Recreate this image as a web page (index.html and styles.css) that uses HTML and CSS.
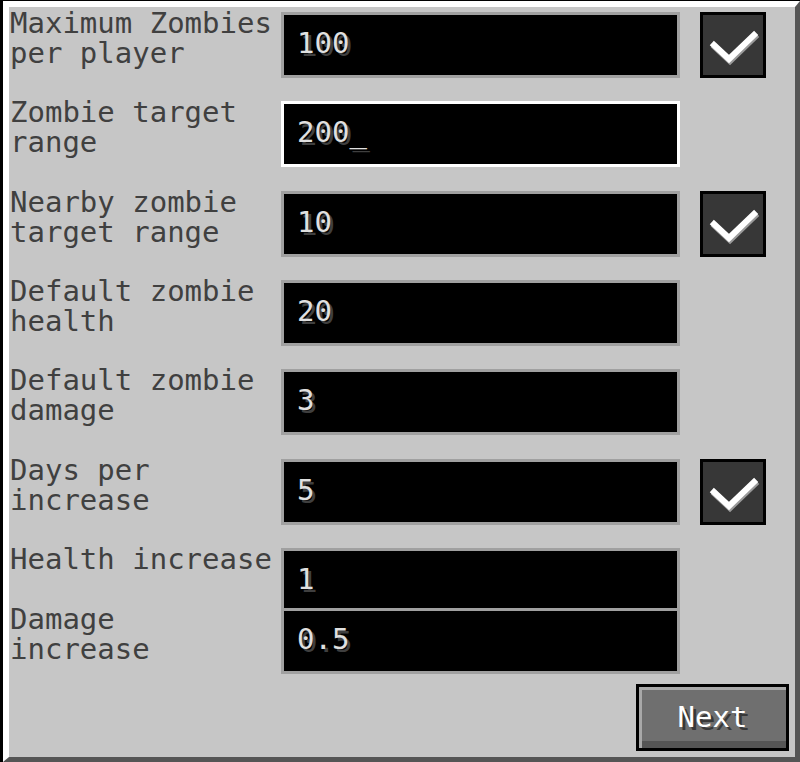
FILE: index.html
```html
<!DOCTYPE html>
<html lang="en">
<head>
    <meta charset="UTF-8">
    <title>Zombie Settings</title>
    <link rel="stylesheet" href="styles.css">
</head>

<body>
    <div class="screen">
        <div class="panel">
            <div class="row">
                <div class="name">Maximum Zombies<br>per player</div>
                <div class="field">100</div>
                <div class="check">
                    <svg viewBox="0 0 60 60" width="60" height="60">
                        <polyline points="12,32 27,46 52,22" class="tick-shade" />
                        <polyline points="11,30 26,44 51,20" class="tick" />
                    </svg>
                </div>
            </div>
            <div class="row">
                <div class="name">Zombie target<br>range</div>
                <div class="field active">200_</div>
            </div>
            <div class="row">
                <div class="name">Nearby zombie<br>target range</div>
                <div class="field">10</div>
                <div class="check">
                    <svg viewBox="0 0 60 60" width="60" height="60">
                        <polyline points="12,32 27,46 52,22" class="tick-shade" />
                        <polyline points="11,30 26,44 51,20" class="tick" />
                    </svg>
                </div>
            </div>
            <div class="row">
                <div class="name">Default zombie<br>health</div>
                <div class="field">20</div>
            </div>
            <div class="row">
                <div class="name">Default zombie<br>damage</div>
                <div class="field">3</div>
            </div>
            <div class="row">
                <div class="name">Days per<br>increase</div>
                <div class="field">5</div>
                <div class="check">
                    <svg viewBox="0 0 60 60" width="60" height="60">
                        <polyline points="12,32 27,46 52,22" class="tick-shade" />
                        <polyline points="11,30 26,44 51,20" class="tick" />
                    </svg>
                </div>
            </div>
            <div class="row short">
                <div class="name">Health increase</div>
                <div class="field">1</div>
            </div>
            <div class="row joined">
                <div class="name">Damage<br>increase</div>
                <div class="field">0.5</div>
            </div>
            <div class="actions">
                <button type="button" class="btn">Next</button>
            </div>
        </div>
    </div>
</body>

</html>
```

FILE: styles.css
```css
body {
    margin: 0;
    background-color: #000;
}

.screen {
    width: 800px;
    height: 762px;
    box-sizing: border-box;
    padding: 1px 0 0 3px;
    background-color: #000;
    overflow: hidden;
}

/* Bevelled grey panel */

.panel {
    height: 761px;
    box-sizing: border-box;
    border-top: 6px solid #fff;
    border-left: 6px solid #fff;
    border-right: 5px solid #555;
    border-bottom: 5px solid #555;
    background-color: #c6c6c6;
    padding: 5px 0 0 1px;
    font-family: "DejaVu Sans Mono", monospace;
    font-size: 29px;
    line-height: 30px;
}

.row {
    display: flex;
    align-items: flex-start;
    height: 66px;
}

.row + .row {
    margin-top: 23.33px;
}

.row.short {
    height: 63px;
}

.row.joined {
    margin-top: -3px;
}

.name {
    width: 271px;
    margin-top: -4px;
    color: #404040;
    white-space: nowrap;
}

/* Text fields */

.field {
    width: 399px;
    height: 66px;
    box-sizing: border-box;
    border: 3px solid #a0a0a0;
    background-color: #000;
    color: #e0e0e0;
    padding: 13px 13px;
    text-shadow: 3px 3px 0 #3f3f3f;
}

.row.short .field {
    height: 63px;
}

.field.active {
    border-color: #fff;
}

/* Checkboxes */

.check {
    margin-left: 20px;
    width: 66px;
    height: 66px;
    box-sizing: border-box;
    border: 3px solid #000;
    background-color: #373737;
}

.check svg {
    display: block;
}

.tick,
.tick-shade {
    fill: none;
    stroke-width: 6;
    stroke-linecap: square;
    stroke-linejoin: miter;
}

.tick {
    stroke: #fff;
}

.tick-shade {
    stroke: #9a9a9a;
}

/* Next button */

.actions {
    display: flex;
    justify-content: flex-end;
    margin-top: 10px;
    padding-right: 6px;
}

.btn {
    width: 153px;
    height: 67px;
    box-sizing: border-box;
    border: 3px solid #000;
    background-color: #6f6f6f;
    box-shadow: inset 3px 3px 0 #a8a8a8, inset 0 -7px 0 #555;
    font: inherit;
    color: #fff;
    text-shadow: 3px 3px 0 #383838;
    padding: 0;
    cursor: pointer;
}
```
